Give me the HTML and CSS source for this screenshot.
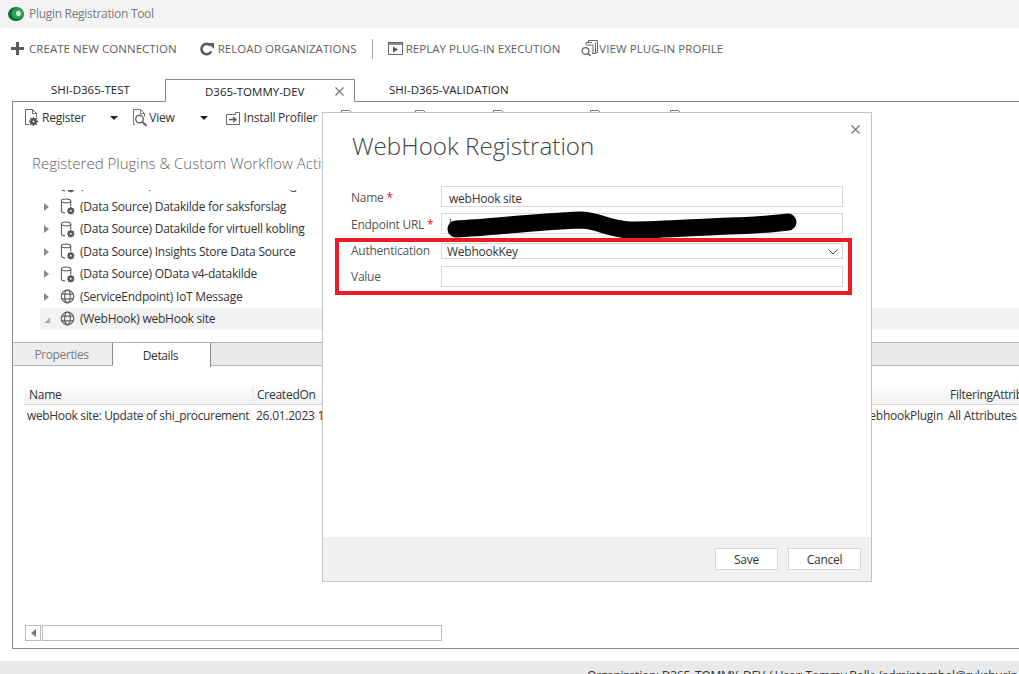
FILE: index.html
```html
<!DOCTYPE html>
<html lang="en">
<head>
<meta charset="utf-8">
<title>Plugin Registration Tool</title>
<link rel="stylesheet" href="styles.css">
</head>
<body>
<svg class="sprite" width="0" height="0">
  <symbol id="db" viewBox="0 0 16 18"><g fill="none" stroke="#555" stroke-width="1.1"><ellipse cx="6.5" cy="3" rx="5" ry="2"/><path d="M1.5 3v11c0 1 1.600 1.700 4 2M11.500 3v6"/></g><circle cx="11.500" cy="13.500" r="2.600" fill="none" stroke="#555" stroke-width="1.600"/><path d="M11.500 9.500v8M7.500 13.500h8M8.700 10.700l5.600 5.600M14.300 10.700l-5.600 5.600" stroke="#555" stroke-width="1.200"/><circle cx="11.500" cy="13.500" r="1" fill="#fff"/></symbol>
  <symbol id="globe" viewBox="0 0 16 16"><g fill="none" stroke="#606060" stroke-width="1.300"><circle cx="8" cy="8" r="6.700"/><ellipse cx="8" cy="8" rx="3" ry="6.700"/><path d="M1.500 5.500h13M1.500 10.500h13"/></g></symbol>
  <symbol id="peek" viewBox="0 0 14 16"><path d="M1.500 15.500V.5h8l3 3v12z" fill="none" stroke="#777"/></symbol>
</svg>

<header class="titlebar">
  <svg class="logo" width="16" height="14" viewBox="0 0 16 14"><ellipse cx="8" cy="7" rx="8" ry="7" fill="#0b6b3a"/><ellipse cx="9.500" cy="6.500" rx="6" ry="5.500" fill="#2da14e"/><ellipse cx="10.500" cy="6.500" rx="2.400" ry="2.800" fill="#cfe8d4"/></svg>
  <span>Plugin Registration Tool</span>
</header>

<nav class="toolbar">
  <div class="tool tool-new">
    <svg width="13" height="13" viewBox="0 0 13 13"><path d="M6.500 0v13M0 6.500h13" stroke="#5c5c5c" stroke-width="3"/></svg>
    <span>CREATE NEW CONNECTION</span>
  </div>
  <div class="tool tool-reload">
    <svg width="14" height="14" viewBox="0 0 14 14"><path d="M11.300 9.500A5.200 5.200 0 1 1 10.500 3.500" fill="none" stroke="#5c5c5c" stroke-width="2.600"/><path d="M8 1h6v6z" fill="#5c5c5c"/></svg>
    <span>RELOAD ORGANIZATIONS</span>
  </div>
  <i class="tool-sep"></i>
  <div class="tool tool-replay">
    <svg width="15" height="13" viewBox="0 0 15 13"><rect x=".5" y=".5" width="14" height="12" fill="none" stroke="#666"/><path d="M.5 2h14" stroke="#666" stroke-width="1.500"/><path d="M5 4.500l5 3-5 3z" fill="#555"/></svg>
    <span>REPLAY PLUG-IN EXECUTION</span>
  </div>
  <div class="tool tool-profile">
    <svg width="17" height="17" viewBox="0 0 17 17"><g fill="none" stroke="#666"><path d="M5 4.500V2.500h6M7.500 2.500V.5h9v12h-2M14.500 2.500v11h-3"/><path d="M5 5h7v8h-1"/><circle cx="4.500" cy="11" r="3.400" stroke-width="1.300"/><path d="M7 13.500l2.500 2.500" stroke-width="1.600"/></g></svg>
    <span>VIEW PLUG-IN PROFILE</span>
  </div>
</nav>

<div class="tabs">
  <div class="tab tab-test">SHI-D365-TEST</div>
  <div class="tab tab-active"><span>D365-TOMMY-DEV</span><svg class="tab-x" width="9" height="9" viewBox="0 0 9 9"><path d="M.5.500l8 8M8.500.500l-8 8" stroke="#777" stroke-width="1.200"/></svg></div>
  <div class="tab tab-valid">SHI-D365-VALIDATION</div>
</div>

<main class="panel">
  <div class="subtools">
    <div class="sub sub-register">
      <svg width="16" height="18" viewBox="0 0 16 18"><path d="M5 15.500H1.500V.5h7l4 4v4M8.500.5v4h4" fill="none" stroke="#666"/><circle cx="9.500" cy="12.500" r="2.600" fill="none" stroke="#555" stroke-width="1.700"/><path d="M9.500 8v9M5 12.500h9M6.300 9.300l6.400 6.400M12.700 9.300l-6.400 6.400" stroke="#555" stroke-width="1.300"/><circle cx="9.500" cy="12.500" r="1" fill="#fff"/></svg>
      <span>Register</span>
    </div>
    <i class="caret caret-1"></i>
    <div class="sub sub-view">
      <svg width="16" height="18" viewBox="0 0 16 18"><path d="M3 15.500H1.500V.5h7l4 4v3M8.500.5v4h4" fill="none" stroke="#777"/><circle cx="7.500" cy="10" r="3.800" fill="none" stroke="#666" stroke-width="1.400"/><path d="M10.500 13l4 4" stroke="#666" stroke-width="2"/></svg>
      <span>View</span>
    </div>
    <i class="caret caret-2"></i>
    <div class="sub sub-install">
      <svg width="14" height="13" viewBox="0 0 14 13"><path d="M.5 2.500h9V.5h4v12H.5z" fill="none" stroke="#666"/><path d="M3 7.500h6M7 5l3 2.500L7 10" fill="none" stroke="#555" stroke-width="1.300"/></svg>
      <span>Install Profiler</span>
    </div>
    <svg class="peek peek-1" width="14" height="16"><use href="#peek"/></svg>
    <svg class="peek peek-2" width="14" height="16"><use href="#peek"/></svg>
    <svg class="peek peek-3" width="14" height="16"><use href="#peek"/></svg>
    <svg class="peek peek-4" width="14" height="16"><use href="#peek"/></svg>
    <svg class="peek peek-5" width="14" height="16"><use href="#peek"/></svg>
  </div>

  <h2 class="tree-title">Registered Plugins &amp; Custom Workflow Activities</h2>

  <ul class="tree">
    <li class="row row-clipped"><i class="arrow"></i><svg width="15" height="17"><use href="#db"/></svg><span>(Data Source) Datakilde for kundeforslag</span></li>
    <li class="row"><i class="arrow"></i><svg width="15" height="17"><use href="#db"/></svg><span>(Data Source) Datakilde for saksforslag</span></li>
    <li class="row"><i class="arrow"></i><svg width="15" height="17"><use href="#db"/></svg><span>(Data Source) Datakilde for virtuell kobling</span></li>
    <li class="row"><i class="arrow"></i><svg width="15" height="17"><use href="#db"/></svg><span>(Data Source) Insights Store Data Source</span></li>
    <li class="row"><i class="arrow"></i><svg width="15" height="17"><use href="#db"/></svg><span>(Data Source) OData v4-datakilde</span></li>
    <li class="row"><i class="arrow"></i><svg width="15" height="15"><use href="#globe"/></svg><span>(ServiceEndpoint) IoT Message</span></li>
    <li class="row row-selected"><i class="arrow arrow-open"></i><svg width="15" height="15"><use href="#globe"/></svg><span>(WebHook) webHook site</span></li>
  </ul>

  <div class="detail-tabs">
    <div class="dtab dtab-off">Properties</div>
    <div class="dtab dtab-on">Details</div>
  </div>

  <div class="grid">
    <div class="grid-head">
      <div class="cell cell-name">Name</div>
      <div class="cell cell-created">CreatedOn</div>
      <div class="cell cell-type"></div>
      <div class="cell cell-filter">FilteringAttributes</div>
    </div>
    <div class="grid-row">
      <div class="cell cell-name cell-data">webHook site: Update of shi_procurement</div>
      <div class="cell cell-created">26.01.2023 10:24:18</div>
      <div class="cell cell-type cell-right">WebhookPlugin</div>
      <div class="cell cell-filter">All Attributes</div>
    </div>
  </div>

  <div class="hscroll">
    <div class="hs-btn"><i></i></div>
    <div class="hs-track"></div>
  </div>
</main>

<footer class="status"><span>Organization: D365_TOMMY_DEV / User: Tommy Bolle (admintombol@sykshusiness.onmicrosoft.com)</span></footer>

<section class="modal">
  <svg class="modal-x" width="9" height="9" viewBox="0 0 9 9"><path d="M.5.500l8 8M8.500.500l-8 8" stroke="#777" stroke-width="1.200"/></svg>
  <h1>WebHook Registration</h1>
  <form class="form">
    <label class="lab lab-name">Name <b>*</b></label>
    <div class="input input-name">webHook site</div>
    <label class="lab lab-url">Endpoint URL <b>*</b></label>
    <div class="input input-url">https</div>
    <label class="lab lab-auth">Authentication</label>
    <div class="input input-auth"><span>WebhookKey</span><svg width="10" height="6" viewBox="0 0 10 6"><path d="M.5.500L5 5 9.500.500" fill="none" stroke="#444"/></svg></div>
    <label class="lab lab-value">Value</label>
    <div class="input input-value"></div>
  </form>
  <div class="modal-foot">
    <button type="button" class="btn btn-save">Save</button>
    <button type="button" class="btn btn-cancel">Cancel</button>
  </div>
</section>

<svg class="scribble" width="360" height="32" viewBox="0 0 360 32"><path d="M13 20C50 18 90 13 137 11 155 11 165 20 187 21 220 21 255 18 287 17 310 17 325 15 345 13" fill="none" stroke="#000" stroke-width="17" stroke-linecap="round" stroke-linejoin="round"/></svg>
<div class="highlight"></div>
</body>
</html>
```
FILE: styles.css
```css
* { box-sizing: border-box; }
html, body { margin: 0; padding: 0; }
body {
  width: 1019px;
  height: 674px;
  overflow: hidden;
  position: relative;
  background: #fff;
  color: #333;
  font: 12px/16px "Open Sans", "Liberation Sans", sans-serif;
  letter-spacing: -.25px;
}
.sprite { position: absolute; }
i { display: block; }
ul { list-style: none; margin: 0; padding: 0; }
h1, h2 { margin: 0; font-weight: 300; }

.titlebar {
  height: 28px;
  background: #f3f3f3;
  display: flex;
  align-items: center;
  padding-left: 8px;
  gap: 5px;
  color: #7a7a7a;
  letter-spacing: -.3px;
}
.toolbar {
  height: 40px;
  display: flex;
  align-items: center;
  padding-left: 11px;
  color: #5d5d5d;
  padding-top: 1px;
}
.tool { display: flex; align-items: center; gap: 5px; white-space: nowrap; font-size: 11.500px; letter-spacing: .05px; }
.tool-reload { margin-left: 23px; gap: 4px; }
.tool-sep { width: 1px; height: 20px; background: #aaa; margin-left: 15px; }
.tool-replay { margin-left: 15px; gap: 3px; }
.tool-profile { margin-left: 21px; gap: 1px; }

.tabs {
  height: 34px;
  position: relative;
  display: flex;
  align-items: flex-end;
  color: #222;
  padding-left: 12px;
}
.tab { height: 23px; display: flex; align-items: center; font-size: 11.500px; letter-spacing: 0; white-space: nowrap; }
.tab-test { width: 153px; padding-left: 39px; border-bottom: 1px solid #8a8a8a; }
.tab-active {
  width: 190px;
  border: 1px solid #8a8a8a;
  border-bottom: 0;
  padding: 1px 10px 0 39px;
  justify-content: space-between;
}
.tab-valid { flex: 1; padding-left: 34px; border-bottom: 1px solid #8a8a8a; }

.panel {
  height: 547px;
  margin-left: 12px;
  border-left: 1px solid #8a8a8a;
  border-bottom: 1px solid #8a8a8a;
  display: flex;
  flex-direction: column;
}
.subtools { height: 28px; flex: none; display: flex; align-items: center; padding: 4px 0 0 11px; color: #333; }
.sub { display: flex; align-items: center; gap: 2px; white-space: nowrap; }
.caret { width: 0; height: 0; border: 4px solid transparent; border-top: 4px solid #222; border-bottom: 0; }
.caret-1 { margin-left: 25px; }
.caret-2 { margin-left: 25px; }
.sub-view { margin-left: 14px; gap: 1px; }
.sub-install { margin-left: 18px; gap: 4px; }
.peek-1 { margin-left: 23px; }
.peek-2 { margin-left: 60px; }
.peek-3 { margin-left: 64px; }
.peek-4 { margin-left: 83px; }
.peek-5 { margin-left: 66px; }

.tree-title {
  margin: 23px 0 0 19px;
  height: 20px;
  flex: none;
  font-size: 15px;
  line-height: 20px;
  font-weight: 300;
  color: #5f5f5f;
  white-space: nowrap;
  letter-spacing: 0;
}
.tree { margin-left: 27px; height: 140px; flex: none; overflow: hidden; margin-top: 17px; position: relative; }
.row { height: 22.400px; display: flex; align-items: center; gap: 6px; white-space: nowrap; padding-left: 4px; }
.row-clipped { margin-top: -16.600px; }
.row-selected { background: #f2f2f2; }
.row span { margin-left: -1px; }
.arrow { width: 0; height: 0; border: 4px solid transparent; border-left: 5px solid #8a8a8a; border-right: 0; margin-right: 5px; }
.arrow-open { width: 6px; height: 6px; border: 0; background: linear-gradient(135deg, transparent 50%, #a8a8a8 50%); margin-right: 4px; margin-top: 3px; }

.detail-tabs {
  margin-top: 12px;
  height: 24px;
  flex: none;
  display: flex;
  background: #e9e9e9;
  border-top: 1px solid #b5b5b5;
  border-bottom: 1px solid #b5b5b5;
}
.dtab { display: flex; align-items: center; justify-content: center; padding-top: 1px; letter-spacing: -.4px; }
.dtab-off { width: 100px; color: #7d7d7d; border-right: 1px solid #8a8a8a; background: #ededed; padding-right: 2px; }
.dtab-on { width: 98px; background: #fff; height: 24px; border-right: 1px solid #8a8a8a; color: #333; padding-right: 2px; }

.grid { margin: 16px 0 0 11px; }
.grid-head, .grid-row { display: flex; white-space: nowrap; }
.grid-head {
  height: 23px;
  align-items: center;
  background: linear-gradient(#fff, #f0f1f3);
  border-bottom: 1px solid #d5d5d5;
  padding-top: 3px;
}
.grid-row { height: 22px; align-items: center; }
.cell { overflow: hidden; }
.cell-name { width: 230px; padding-left: 5px; border-right: 2px solid #eee; }
.cell-data { border-right: 2px solid transparent; padding-left: 3px; letter-spacing: -.35px; }
.cell-created { width: 100px; padding-left: 3px; }
.grid-row .cell-created { padding-left: 2px; }
.cell-type { width: 591px; text-align: right; border-right: 3px solid #eee; }
.cell-right { border-right: 2px solid transparent; }
.cell-filter { width: 74px; padding-left: 5px; }
.grid-row .cell-filter { padding-left: 3px; }

.hscroll { margin: auto 0 7px 12px; display: flex; gap: 1px; height: 16px; }
.hs-btn { width: 16px; border: 1px solid #bbb; display: flex; align-items: center; justify-content: center; }
.hs-btn i { width: 0; height: 0; border: 4px solid transparent; border-right: 5px solid #777; border-left: 0; }
.hs-track { width: 400px; border: 1px solid #bbb; }

.status {
  margin-top: 12px;
  height: 14px;
  background: #e9e9e9;
  padding-left: 587px;
  white-space: nowrap;
  overflow: hidden;
  color: #333;
  line-height: 30px;
}

.modal {
  position: absolute;
  left: 322px;
  top: 112px;
  width: 550px;
  height: 470px;
  background: #fff;
  border: 1px solid #c4c4c4;
  display: flex;
  flex-direction: column;
}
.modal-x { position: absolute; right: 11px; top: 12px; }
.modal h1 { font-size: 24.200px; line-height: 34px; color: #444; margin: 16px 0 0 29px; white-space: nowrap; font-weight: 300; letter-spacing: 0; }
.form {
  display: grid;
  grid-template-columns: 90px 402px;
  grid-template-rows: 21px 27px 25px 28px;
  margin: 23px 0 0 28px;
  flex: 1;
  align-content: start;
}
.lab { color: #555; white-space: nowrap; align-self: start; }
.lab b { color: #e81123; font-weight: 400; }
.input { border: 1px solid #d8d8d8; color: #333; display: flex; align-items: center; padding-left: 7px; }
.lab-name { margin-top: 4px; }
.input-name { padding-top: 5px; }
.lab-url { margin-top: 10px; }
.input-url { margin-top: 6px; height: 21px; padding-top: 3px; }
.lab-auth { margin-top: 9px; }
.input-auth { margin-top: 9px; height: 16px; justify-content: space-between; padding: 1px 4px 0 5px; }
.lab-value { margin-top: 10px; }
.input-value { margin-top: 7px; height: 21px; }

.modal-foot {
  height: 44px;
  background: #f0f0f0;
  display: flex;
  justify-content: flex-end;
  align-items: flex-start;
  padding: 11px 10px 0 0;
  gap: 10px;
}
.btn {
  height: 22px;
  background: #fff;
  border: 1px solid #d8d8d8;
  font: inherit;
  letter-spacing: inherit;
  color: #333;
  padding: 2px 0 0;
}
.btn-save { width: 63px; }
.btn-cancel { width: 73px; }

.scribble { position: absolute; left: 443px; top: 209px; }
.highlight {
  position: absolute;
  left: 335px;
  top: 238px;
  width: 517px;
  height: 57px;
  border: 4px solid #ed1c24;
}
```
